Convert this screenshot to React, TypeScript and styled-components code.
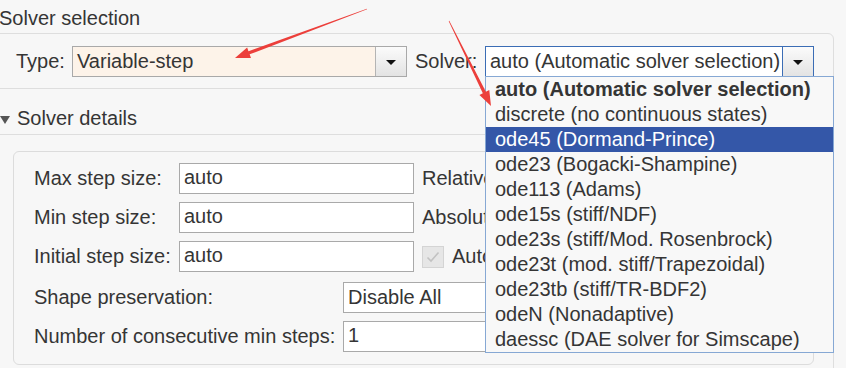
import React from "react";
import styled, { createGlobalStyle } from "styled-components";

const GlobalStyle = createGlobalStyle`
  html, body {
    margin: 0;
    padding: 0;
    background: #f7f7f7;
    overflow: hidden;
  }
  body {
    font-family: "Liberation Sans", Arial, sans-serif;
    font-size: 20px;
    color: #353535;
  }
`;

const Page = styled.div`
  position: relative;
  width: 846px;
  height: 368px;
  overflow: hidden;
`;

const Root = styled.div`
  margin-left: -10px;
  width: 844px;
`;

const SectionTitle = styled.div`
  height: 33px;
  box-sizing: border-box;
  padding: 7px 0 0 9px;
  line-height: 23px;
`;

const SelectionPanel = styled.div`
  height: 56px;
  box-sizing: border-box;
  border: 1px solid #dedede;
  border-radius: 0 6px 6px 0;
  display: flex;
  align-items: center;
  padding-left: 25px;
`;

const FieldLabel = styled.span<{ $w?: number; $ml?: number }>`
  display: inline-block;
  width: ${(p) => (p.$w ? `${p.$w}px` : "auto")};
  margin-left: ${(p) => p.$ml || 0}px;
  white-space: nowrap;
  line-height: 23px;
`;

const Combo = styled.div<{ $w: number; $bg?: string; $focus?: boolean }>`
  position: relative;
  width: ${(p) => p.$w}px;
  height: 31px;
  box-sizing: border-box;
  border: 1px solid ${(p) => (p.$focus ? "#3b6db5" : "#a9a9a9")};
  background: ${(p) => p.$bg || "#fff"};
  display: flex;
`;

const ComboText = styled.div`
  flex: 1;
  padding-left: 4px;
  line-height: 28px;
  white-space: nowrap;
  overflow: hidden;
`;

const ComboButton = styled.div<{ $focus?: boolean }>`
  width: 30px;
  border-left: 1px solid ${(p) => (p.$focus ? "#3b6db5" : "#b4b4b4")};
  background: linear-gradient(#fbfbfb, #e3e3e3);
  display: flex;
  align-items: center;
  justify-content: center;
`;

const Caret = styled.div`
  width: 0;
  height: 0;
  border-left: 5px solid transparent;
  border-right: 5px solid transparent;
  border-top: 5px solid #111;
  margin-top: 2px;
`;

const Popup = styled.div`
  position: absolute;
  left: -1px;
  top: 29px;
  width: 349px;
  box-sizing: border-box;
  border: 1px solid #86a8d4;
  background: #f8f8f8;
  z-index: 5;
`;

const PopupItem = styled.div<{ $bold?: boolean; $selected?: boolean }>`
  height: 25px;
  line-height: 25px;
  padding-left: 9px;
  white-space: nowrap;
  font-weight: ${(p) => (p.$bold ? 700 : 400)};
  background: ${(p) => (p.$selected ? "#3457a8" : "transparent")};
  color: ${(p) => (p.$selected ? "#fff" : "#353535")};
`;

const DetailsHeader = styled.div`
  height: 45px;
  box-sizing: border-box;
  padding: 18px 0 0 10px;
  display: flex;
  align-items: flex-start;
  line-height: 23px;
`;

const Disclosure = styled.div`
  width: 0;
  height: 0;
  border-left: 5px solid transparent;
  border-right: 5px solid transparent;
  border-top: 8px solid #555;
  margin: 9px 7px 0 0;
`;

const DetailsPanel = styled.div`
  border-top: 1px solid #dedede;
  border-right: 1px solid #dedede;
  border-radius: 0 6px 0 0;
  height: 240px;
  box-sizing: border-box;
  padding: 16px 0 0 23px;
`;

const InnerPanel = styled.div`
  width: 801px;
  height: 214px;
  box-sizing: border-box;
  border: 1px solid #dcdcdc;
  border-radius: 6px;
  padding: 11px 0 0 20px;
`;

const Row = styled.div<{ $mt?: number }>`
  display: flex;
  align-items: center;
  height: 31px;
  margin-top: ${(p) => p.$mt || 0}px;
`;

const TextField = styled.div<{ $w: number }>`
  width: ${(p) => p.$w}px;
  height: 31px;
  box-sizing: border-box;
  border: 1px solid #a9a9a9;
  background: #fff;
  padding-left: 4px;
  line-height: 27px;
`;

const SideLabel = styled.span`
  margin-left: 8px;
  white-space: nowrap;
`;

const CheckBox = styled.div`
  width: 22px;
  height: 22px;
  margin-left: 8px;
  box-sizing: border-box;
  border: 1px solid #d4d4d4;
  background: #e6e6e6;
  display: flex;
  align-items: center;
  justify-content: center;
`;

const ArrowLayer = styled.svg`
  position: absolute;
  left: 0;
  top: 0;
  pointer-events: none;
  z-index: 10;
`;

const solvers = [
  "discrete (no continuous states)",
  "ode45 (Dormand-Prince)",
  "ode23 (Bogacki-Shampine)",
  "ode113 (Adams)",
  "ode15s (stiff/NDF)",
  "ode23s (stiff/Mod. Rosenbrock)",
  "ode23t (mod. stiff/Trapezoidal)",
  "ode23tb (stiff/TR-BDF2)",
  "odeN (Nonadaptive)",
  "daessc (DAE solver for Simscape)",
];

// tapered arrow, thin at the tail, head at the tip
const arrowPoints = (x1: number, y1: number, x2: number, y2: number) => {
  const len = Math.hypot(x2 - x1, y2 - y1);
  const ux = (x2 - x1) / len;
  const uy = (y2 - y1) / len;
  const nx = -uy;
  const ny = ux;
  const headLen = 15;
  const headW = 11;
  const shaftW = 3.4;
  const tailW = 0.6;
  const bx = x2 - ux * headLen;
  const by = y2 - uy * headLen;
  const pts = [
    [x1 + (nx * tailW) / 2, y1 + (ny * tailW) / 2],
    [bx + (nx * shaftW) / 2, by + (ny * shaftW) / 2],
    [bx + (nx * headW) / 2, by + (ny * headW) / 2],
    [x2, y2],
    [bx - (nx * headW) / 2, by - (ny * headW) / 2],
    [bx - (nx * shaftW) / 2, by - (ny * shaftW) / 2],
    [x1 - (nx * tailW) / 2, y1 - (ny * tailW) / 2],
  ];
  return pts.map((p) => p.join(",")).join(" ");
};

const DropButton = ({ focus }: { focus?: boolean }) => (
  <ComboButton $focus={focus}>
    <Caret />
  </ComboButton>
);

export default function App() {
  return (
    <Page>
      <GlobalStyle />
      <Root>
        <SectionTitle>Solver selection</SectionTitle>
        <SelectionPanel>
          <FieldLabel $w={56}>Type:</FieldLabel>
          <Combo $w={335} $bg="#fdf3e9">
            <ComboText>Variable-step</ComboText>
            <DropButton />
          </Combo>
          <FieldLabel $w={70} $ml={8}>
            Solver:
          </FieldLabel>
          <Combo $w={329} $focus>
            <ComboText>auto (Automatic solver selection)</ComboText>
            <DropButton focus />
            <Popup>
              <PopupItem $bold>auto (Automatic solver selection)</PopupItem>
              {solvers.map((s) => (
                <PopupItem key={s} $selected={s.startsWith("ode45")}>
                  {s}
                </PopupItem>
              ))}
            </Popup>
          </Combo>
        </SelectionPanel>

        <DetailsHeader>
          <Disclosure />
          Solver details
        </DetailsHeader>
        <DetailsPanel>
          <InnerPanel>
            <Row>
              <FieldLabel $w={145}>Max step size:</FieldLabel>
              <TextField $w={235}>auto</TextField>
              <SideLabel>Relative tolerance:</SideLabel>
            </Row>
            <Row $mt={8}>
              <FieldLabel $w={145}>Min step size:</FieldLabel>
              <TextField $w={235}>auto</TextField>
              <SideLabel>Absolute tolerance:</SideLabel>
            </Row>
            <Row $mt={8}>
              <FieldLabel $w={145}>Initial step size:</FieldLabel>
              <TextField $w={235}>auto</TextField>
              <CheckBox>
                <svg width="14" height="12" viewBox="0 0 14 12">
                  <path
                    d="M1.5 6.5 L5 10 L12.5 1.5"
                    fill="none"
                    stroke="#c2c2c2"
                    strokeWidth="1.6"
                  />
                </svg>
              </CheckBox>
              <SideLabel>Auto scale absolute tolerance</SideLabel>
            </Row>
            <Row $mt={10}>
              <FieldLabel $w={309}>Shape preservation:</FieldLabel>
              <Combo $w={300}>
                <ComboText>Disable All</ComboText>
                <DropButton />
              </Combo>
            </Row>
            <Row $mt={8}>
              <FieldLabel $w={309}>Number of consecutive min steps:</FieldLabel>
              <TextField $w={300}>1</TextField>
            </Row>
          </InnerPanel>
        </DetailsPanel>
      </Root>
      <ArrowLayer width="846" height="368">
        <polygon points={arrowPoints(367, 9, 235, 58)} fill="#ec3f3b" />
        <polygon points={arrowPoints(449, 21, 491, 106)} fill="#ec3f3b" />
      </ArrowLayer>
    </Page>
  );
}
